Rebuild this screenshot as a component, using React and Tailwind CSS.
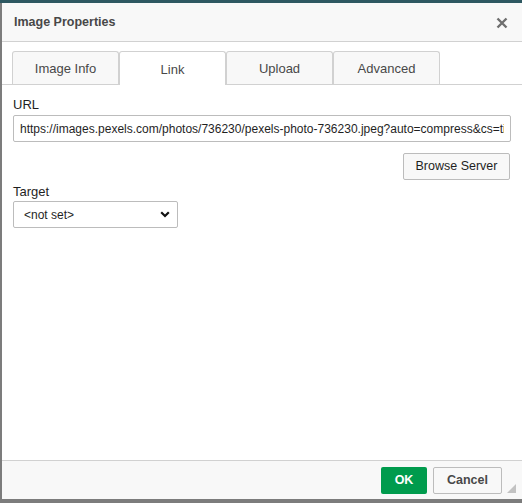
import React, { useState } from 'react';

const tabs = ['Image Info', 'Link', 'Upload', 'Advanced'];

export default function App() {
  const [active, setActive] = useState('Link');
  const [url, setUrl] = useState(
    'https://images.pexels.com/photos/736230/pexels-photo-736230.jpeg?auto=compress&cs=tinysrgb&w=1260&h=750&dpr=1'
  );

  return (
    <div
      className="w-[522px] h-[503px] bg-[#7c7c7c] border-t-[3px] border-[#2e5861] pl-[2px] pb-[4px] overflow-hidden"
      style={{ fontFamily: '"Liberation Sans", Arial, sans-serif' }}
    >
      <div className="h-full bg-white flex flex-col">
        {/* titlebar */}
        <div className="h-[39px] shrink-0 bg-[#f8f8f8] border-b border-[#d1d1d1] flex items-center justify-between pl-[12px] pr-[14px]">
          <span className="text-[12.5px] font-bold text-[#484848]">Image Properties</span>
          <svg width="12" height="12" viewBox="0 0 12 12" className="mt-[1px]">
            <path d="M1.5 1.5 L10.5 10.5 M10.5 1.5 L1.5 10.5" stroke="#6f6f6f" strokeWidth="2.4" />
          </svg>
        </div>

        {/* tabs */}
        <div className="pt-[9px] border-b border-[#d1d1d1] pl-[10px] flex shrink-0">
          {tabs.map((t) => (
            <button
              key={t}
              onClick={() => setActive(t)}
              className={
                active === t
                  ? 'w-[107px] h-[34px] -mb-px bg-white border border-b-0 border-[#d1d1d1] rounded-t-[3px] text-[13px] text-[#484848] pt-[2px]'
                  : 'w-[107px] h-[33px] bg-[#f8f8f8] border border-b-0 border-[#d1d1d1] rounded-t-[3px] text-[13px] text-[#484848] pt-[2px]'
              }
            >
              {t}
            </button>
          ))}
        </div>

        {/* body */}
        <div className="flex-1 px-[11px] pt-[12px]">
          <div className="text-[13px] text-[#1f1f1f] leading-[16px]">URL</div>
          <input
            value={url}
            onChange={(e) => setUrl(e.target.value)}
            className="mt-[2px] w-full h-[27px] border border-[#bcbcbc] rounded-[2px] px-[6px] text-[12px] text-[#1f1f1f] outline-none"
          />
          <div className="flex justify-end mt-[11px] pr-[1px]">
            <button className="h-[27px] w-[107px] bg-[#f8f8f8] border border-[#bcbcbc] rounded-[2px] text-[12.5px] text-[#1f1f1f]">
              Browse Server
            </button>
          </div>
          <div className="text-[13px] text-[#1f1f1f] leading-[16px] mt-[4px]">Target</div>
          <div className="mt-[1px] w-[165px] h-[27px] border border-[#bcbcbc] rounded-[2px] flex items-center justify-between pl-[10px] pr-[7px]">
            <span className="text-[12px] text-[#1f1f1f]">&lt;not set&gt;</span>
            <svg width="10" height="7" viewBox="0 0 10 7">
              <path d="M1.2 1.2 L5 5 L8.8 1.2" fill="none" stroke="#111" strokeWidth="2.2" />
            </svg>
          </div>
        </div>

        {/* footer */}
        <div className="h-[39px] shrink-0 bg-[#f8f8f8] border-t border-[#d1d1d1] flex items-center justify-end pr-[20px] gap-[6px] relative">
          <button className="h-[27px] w-[46px] bg-[#009b4d] rounded-[2px] text-[12.5px] font-bold text-white">
            OK
          </button>
          <button className="h-[27px] w-[69px] bg-[#f8f8f8] border border-[#bcbcbc] rounded-[2px] text-[12.5px] font-bold text-[#484848]">
            Cancel
          </button>
          <svg width="9" height="9" viewBox="0 0 9 9" className="absolute right-[6px] bottom-[6px]">
            <path d="M9 0 L9 9 L0 9 Z" fill="#c2c2c2" />
          </svg>
        </div>
      </div>
    </div>
  );
}
